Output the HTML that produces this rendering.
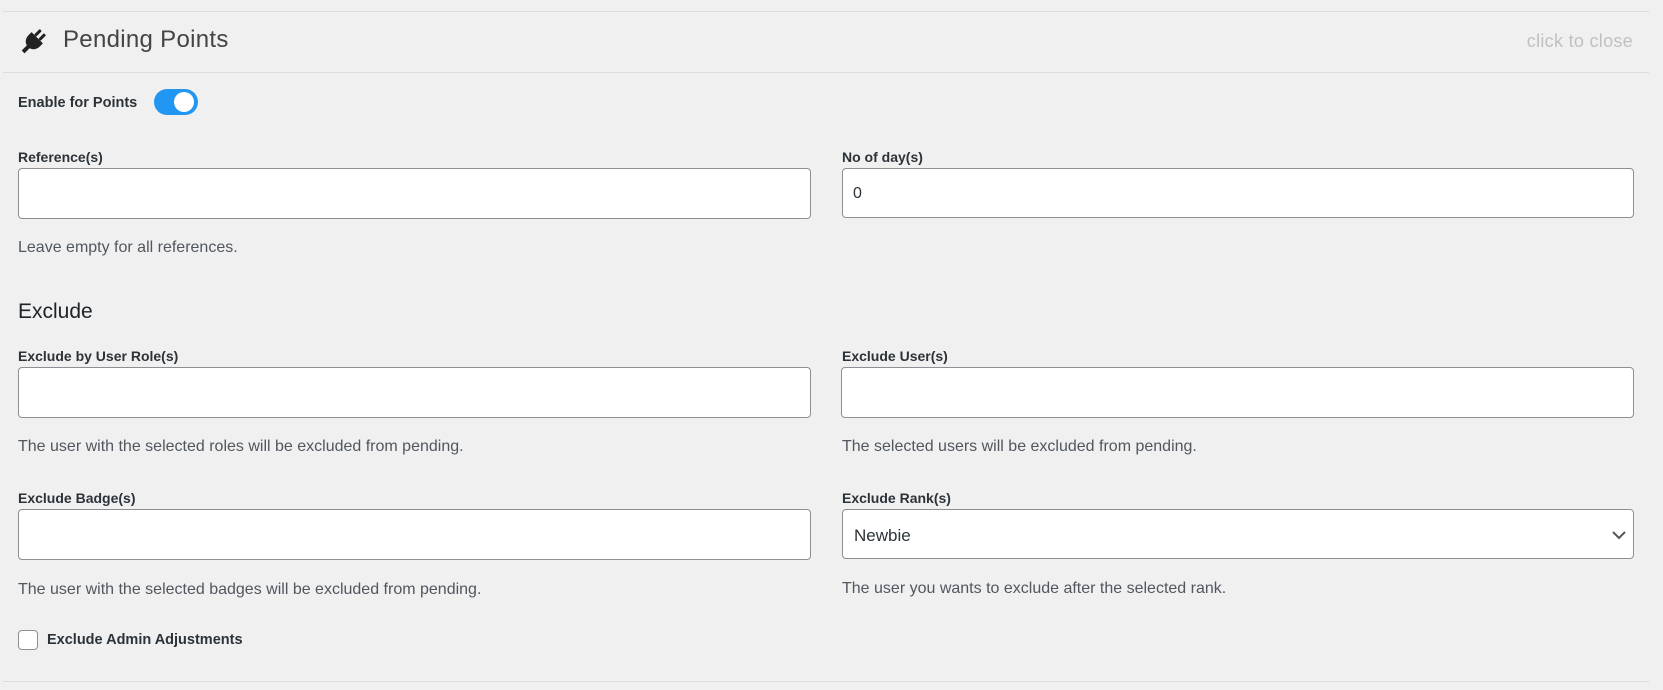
<!DOCTYPE html>
<html><head><meta charset="utf-8"><style>
*{box-sizing:border-box;margin:0;padding:0}
body{width:1663px;height:690px;background:#f0f0f1;font-family:"Liberation Sans",Arial,sans-serif;color:#3c434a;position:relative;overflow:hidden}
.a{position:absolute}
.hl{position:absolute;left:3px;width:1646px;height:1px;background:#dcdcde}
.lab{position:absolute;font-size:14px;font-weight:bold;color:#2c3338;line-height:16px}
.inp{position:absolute;background:#fff;border:1px solid #8c8f94;border-radius:4px;height:51px}
.help{position:absolute;font-size:16px;color:#50575e;line-height:18px}
</style></head><body>
<div class="hl" style="top:11px"></div>
<div class="hl" style="top:72px"></div>
<div class="hl" style="top:681px"></div>
<svg class="a" style="left:18px;top:27px" width="30" height="30" viewBox="0 0 30 30">
<g transform="rotate(45 15 15)" fill="#222">
<rect x="10.5" y="1" width="3" height="8" rx="1"/>
<rect x="16.5" y="1" width="3" height="8" rx="1"/>
<path d="M7 9 H23 V13 C23 19 19 22 15 22 C11 22 7 19 7 13 Z"/>
<rect x="13" y="21" width="4" height="8"/>
</g>
</svg>
<div class="a" style="left:63px;top:26px;font-size:24px;color:#444;letter-spacing:0.3px">Pending Points</div>
<div class="a" style="right:30px;top:31px;font-size:18px;color:#c0c0c0;letter-spacing:0.3px">click to close</div>
<div class="lab" style="left:18px;top:95px;font-size:14.5px">Enable for Points</div>
<div class="a" style="left:154px;top:89px;width:44px;height:26px;border-radius:13px;background:#2196f3"></div>
<div class="a" style="left:174px;top:92px;width:20px;height:20px;border-radius:50%;background:#fff"></div>

<div class="lab" style="left:18px;top:149px">Reference(s)</div>
<div class="inp" style="left:18px;top:168px;width:793px"></div>
<div class="help" style="left:18px;top:239px">Leave empty for all references.</div>
<div class="lab" style="left:842px;top:149px">No of day(s)</div>
<div class="inp" style="left:842px;top:168px;width:792px;height:50px"></div>
<div class="a" style="left:853px;top:185px;font-size:16px;color:#2c3338">0</div>

<div class="a" style="left:18px;top:300px;font-size:21px;color:#1d2327">Exclude</div>

<div class="lab" style="left:18px;top:348px">Exclude by User Role(s)</div>
<div class="inp" style="left:18px;top:367px;width:793px"></div>
<div class="help" style="left:18px;top:438px">The user with the selected roles will be excluded from pending.</div>
<div class="lab" style="left:842px;top:348px">Exclude User(s)</div>
<div class="inp" style="left:841px;top:367px;width:793px"></div>
<div class="help" style="left:842px;top:438px">The selected users will be excluded from pending.</div>

<div class="lab" style="left:18px;top:490px">Exclude Badge(s)</div>
<div class="inp" style="left:18px;top:509px;width:793px"></div>
<div class="help" style="left:18px;top:581px">The user with the selected badges will be excluded from pending.</div>
<div class="lab" style="left:842px;top:490px">Exclude Rank(s)</div>
<div class="inp" style="left:842px;top:509px;width:792px;height:50px"></div>
<div class="a" style="left:854px;top:526px;font-size:17px;color:#2c3338">Newbie</div>
<svg class="a" style="left:1611px;top:530px" width="16" height="10" viewBox="0 0 16 10"><path d="M2 2 L8 8 L14 2" fill="none" stroke="#50575e" stroke-width="2"/></svg>
<div class="help" style="left:842px;top:580px">The user you wants to exclude after the selected rank.</div>

<div class="a" style="left:18px;top:630px;width:20px;height:20px;border:1px solid #8c8f94;border-radius:4px;background:#fff"></div>
<div class="lab" style="left:47px;top:632px;font-size:14.5px">Exclude Admin Adjustments</div>
</body></html>
